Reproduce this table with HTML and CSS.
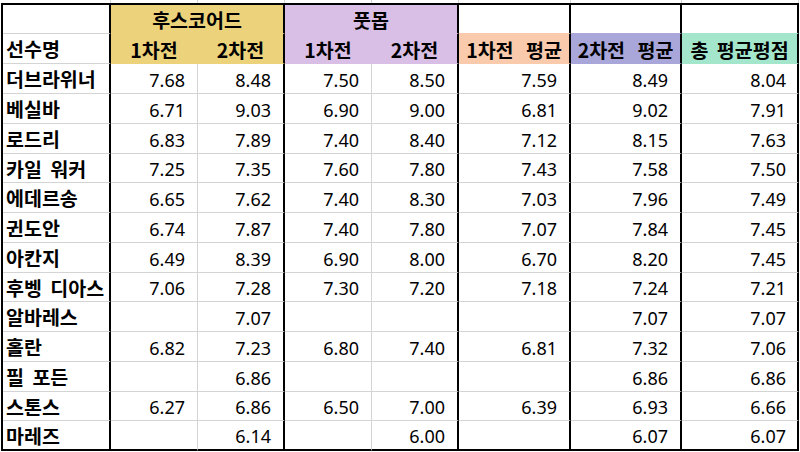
FILE: index.html
```html
<!DOCTYPE html>
<html lang="ko">
<head>
<meta charset="utf-8">
<title>평점표</title>
<link rel="stylesheet" href="styles.css">
</head>
<body>
<div class="sheet">
  <div class="strip">
    <span></span><span></span><span></span><span></span><span></span><span></span><span></span><span></span>
  </div>
  <div class="table">
    <div class="row h1">
      <div class="cell tk"></div>
      <div class="cell hd tk span2 yellow">후스코어드</div>
      <div class="cell hd tk span2 purple">풋몹</div>
      <div class="cell tk under-peach"></div>
      <div class="cell tk under-blue"></div>
      <div class="cell tk under-green"></div>
    </div>
    <div class="row h2">
      <div class="cell tk name">선수명</div>
      <div class="cell hd yellow">1차전</div>
      <div class="cell hd tk yellow">2차전</div>
      <div class="cell hd purple">1차전</div>
      <div class="cell hd tk purple">2차전</div>
      <div class="cell hd tk peach wide">1차전 평균</div>
      <div class="cell hd tk blue wide">2차전 평균</div>
      <div class="cell hd tk green">총 평균평점</div>
    </div>
    <div class="row data"><div class="cell name">더브라위너</div><div class="cell num">7.68</div><div class="cell num">8.48</div><div class="cell num">7.50</div><div class="cell num">8.50</div><div class="cell num">7.59</div><div class="cell num">8.49</div><div class="cell num">8.04</div></div>
    <div class="row data"><div class="cell name">베실바</div><div class="cell num">6.71</div><div class="cell num">9.03</div><div class="cell num">6.90</div><div class="cell num">9.00</div><div class="cell num">6.81</div><div class="cell num">9.02</div><div class="cell num">7.91</div></div>
    <div class="row data"><div class="cell name">로드리</div><div class="cell num">6.83</div><div class="cell num">7.89</div><div class="cell num">7.40</div><div class="cell num">8.40</div><div class="cell num">7.12</div><div class="cell num">8.15</div><div class="cell num">7.63</div></div>
    <div class="row data short"><div class="cell name">카일 워커</div><div class="cell num">7.25</div><div class="cell num">7.35</div><div class="cell num">7.60</div><div class="cell num">7.80</div><div class="cell num">7.43</div><div class="cell num">7.58</div><div class="cell num">7.50</div></div>
    <div class="row data"><div class="cell name">에데르송</div><div class="cell num">6.65</div><div class="cell num">7.62</div><div class="cell num">7.40</div><div class="cell num">8.30</div><div class="cell num">7.03</div><div class="cell num">7.96</div><div class="cell num">7.49</div></div>
    <div class="row data"><div class="cell name">귄도안</div><div class="cell num">6.74</div><div class="cell num">7.87</div><div class="cell num">7.40</div><div class="cell num">7.80</div><div class="cell num">7.07</div><div class="cell num">7.84</div><div class="cell num">7.45</div></div>
    <div class="row data"><div class="cell name">아칸지</div><div class="cell num">6.49</div><div class="cell num">8.39</div><div class="cell num">6.90</div><div class="cell num">8.00</div><div class="cell num">6.70</div><div class="cell num">8.20</div><div class="cell num">7.45</div></div>
    <div class="row data short"><div class="cell name">후벵 디아스</div><div class="cell num">7.06</div><div class="cell num">7.28</div><div class="cell num">7.30</div><div class="cell num">7.20</div><div class="cell num">7.18</div><div class="cell num">7.24</div><div class="cell num">7.21</div></div>
    <div class="row data"><div class="cell name">알바레스</div><div class="cell num"></div><div class="cell num">7.07</div><div class="cell num"></div><div class="cell num"></div><div class="cell num"></div><div class="cell num">7.07</div><div class="cell num">7.07</div></div>
    <div class="row data"><div class="cell name">홀란</div><div class="cell num">6.82</div><div class="cell num">7.23</div><div class="cell num">6.80</div><div class="cell num">7.40</div><div class="cell num">6.81</div><div class="cell num">7.32</div><div class="cell num">7.06</div></div>
    <div class="row data"><div class="cell name">필 포든</div><div class="cell num"></div><div class="cell num">6.86</div><div class="cell num"></div><div class="cell num"></div><div class="cell num"></div><div class="cell num">6.86</div><div class="cell num">6.86</div></div>
    <div class="row data short"><div class="cell name">스톤스</div><div class="cell num">6.27</div><div class="cell num">6.86</div><div class="cell num">6.50</div><div class="cell num">7.00</div><div class="cell num">6.39</div><div class="cell num">6.93</div><div class="cell num">6.66</div></div>
    <div class="row data last"><div class="cell name">마레즈</div><div class="cell num"></div><div class="cell num">6.14</div><div class="cell num"></div><div class="cell num">6.00</div><div class="cell num"></div><div class="cell num">6.07</div><div class="cell num">6.07</div></div>
  </div>
</div>
</body>
</html>
```

FILE: styles.css
```css
* { box-sizing: border-box; }

body {
  margin: 0;
  background: #ffffff;
  color: #000000;
  font-family: "Noto Sans CJK KR", sans-serif;
}

.sheet {
  margin-left: 1px;
  width: 798px;
}

.strip,
.row {
  display: grid;
  grid-template-columns: 108px 87px 87px 87px 87px 112px 111px 117px;
}

.strip {
  height: 3px;
  margin-left: 2px;
}

.strip span {
  border-right: 1px solid #d4d4d4;
}

.table {
  border-left: 2px solid #000;
  border-top: 2px solid #000;
}

.row { height: 30px; }
.row.h1 { height: 29px; }
.row.short { height: 29px; }

.cell {
  display: flex;
  align-items: center;
  overflow: hidden;
  white-space: nowrap;
  border-right: 1px solid #d4d4d4;
  border-bottom: 1px solid #d4d4d4;
}

.tk { border-right: 2px solid #000; }

.data .cell:nth-child(1),
.data .cell:nth-child(3),
.data .cell:nth-child(5),
.data .cell:nth-child(6),
.data .cell:nth-child(7),
.data .cell:nth-child(8) {
  border-right: 2px solid #000;
}

.last .cell { border-bottom: 2px solid #000; }

.span2 { grid-column: span 2; }

.name {
  font-weight: 700;
  font-size: 19.5px;
  padding-left: 3px;
  word-spacing: 3px;
}

.hd {
  justify-content: center;
  font-weight: 700;
  font-size: 19.5px;
  word-spacing: 3px;
  padding-top: 1px;
}

.hd.wide { word-spacing: 7px; }

.num {
  justify-content: flex-end;
  padding-right: 12px;
  padding-top: 2px;
  font-family: "Noto Sans", sans-serif;
  font-size: 18px;
}

.data .cell:nth-child(8) { padding-right: 11px; }

.yellow { background: #ecd27a; border-bottom-color: #ecd27a; }
.yellow:not(.tk) { border-right-color: #ecd27a; }
.purple { background: #d9bee6; border-bottom-color: #d9bee6; }
.purple:not(.tk) { border-right-color: #d9bee6; }
.peach { background: #f9caab; border-bottom-color: #f9caab; }
.blue { background: #a9a7da; border-bottom-color: #a9a7da; }
.green { background: #a3e6cb; border-bottom-color: #a3e6cb; }

.under-peach { border-bottom-color: #f9caab; }
.under-blue { border-bottom-color: #a9a7da; }
.under-green { border-bottom-color: #a3e6cb; }
```
